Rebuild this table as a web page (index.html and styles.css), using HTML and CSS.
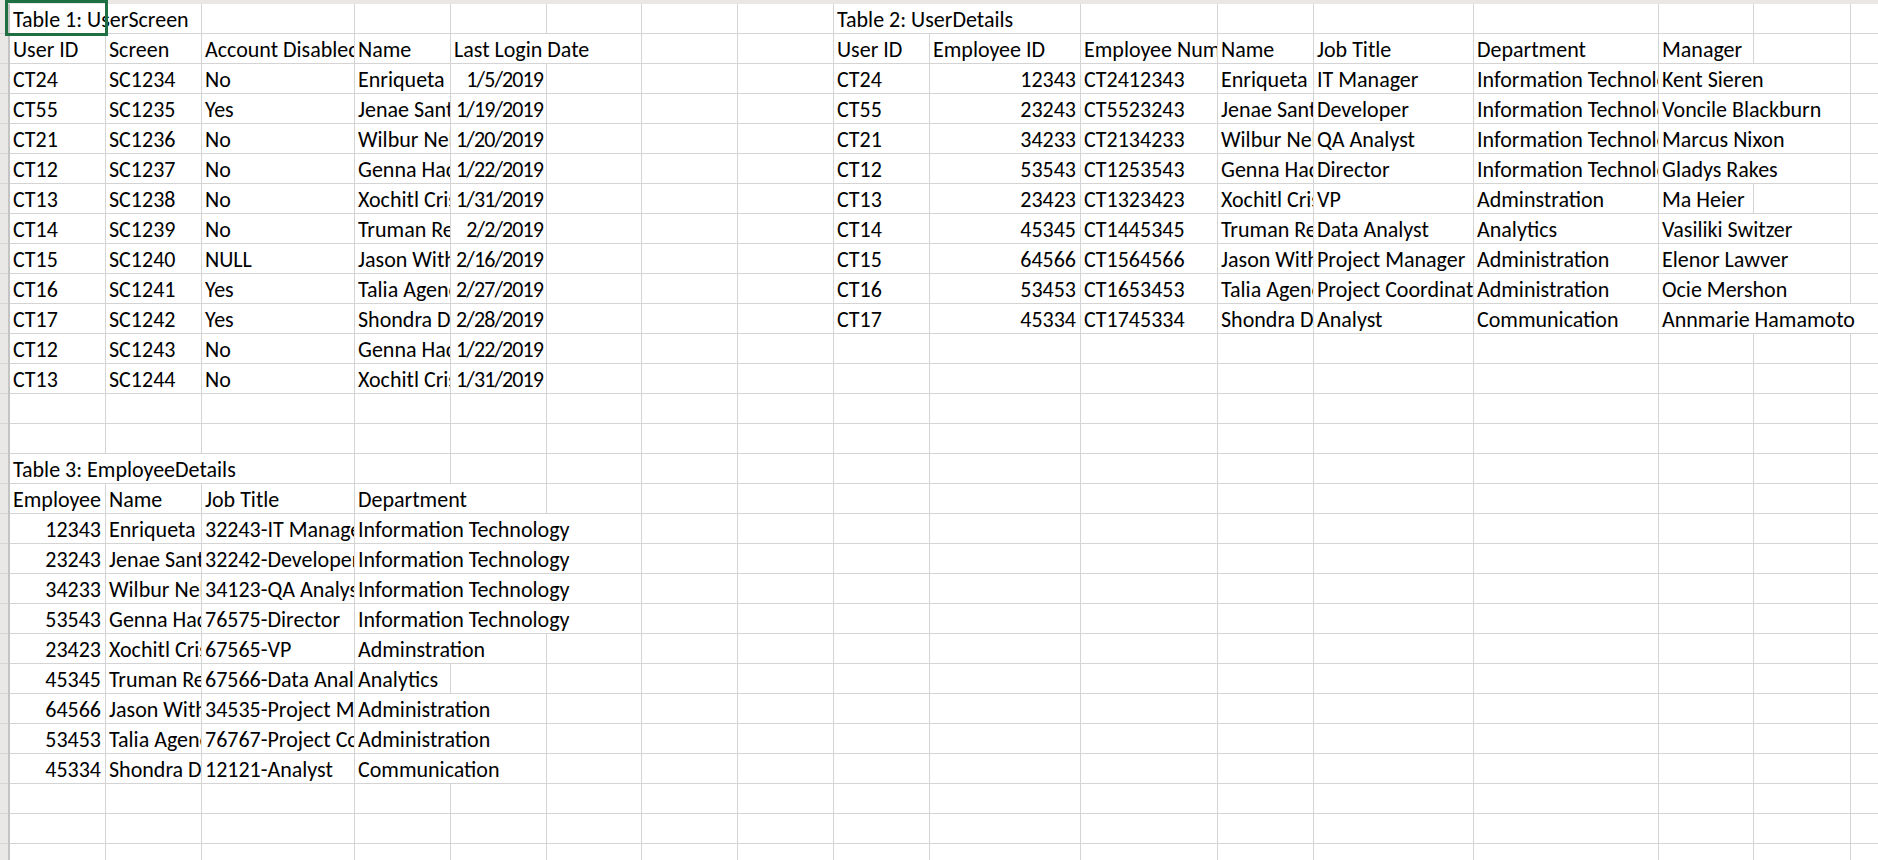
FILE: index.html
```html
<!DOCTYPE html>
<html>
<head>
<meta charset="utf-8">
<title>Sheet</title>
<link rel="stylesheet" href="styles.css">
</head>
<body>
<div class="topbar"></div>
<div class="main">
  <div class="rowheads">
    <div class="rh"></div><div class="rh"></div><div class="rh"></div><div class="rh"></div><div class="rh"></div>
    <div class="rh"></div><div class="rh"></div><div class="rh"></div><div class="rh"></div><div class="rh"></div>
    <div class="rh"></div><div class="rh"></div><div class="rh"></div><div class="rh"></div><div class="rh"></div>
    <div class="rh"></div><div class="rh"></div><div class="rh"></div><div class="rh"></div><div class="rh"></div>
    <div class="rh"></div><div class="rh"></div><div class="rh"></div><div class="rh"></div><div class="rh"></div>
    <div class="rh"></div><div class="rh"></div><div class="rh"></div><div class="rh"></div>
  </div>
  <div class="grid">
    <!-- row 1 -->
    <div class="c s2 sel">Table 1: UserScreen<div class="selbox"></div></div>
    <div class="c"></div><div class="c"></div><div class="c"></div><div class="c"></div><div class="c"></div><div class="c"></div>
    <div class="c s2">Table 2: UserDetails</div>
    <div class="c"></div><div class="c"></div><div class="c"></div><div class="c"></div><div class="c"></div><div class="c"></div><div class="c"></div>
    <!-- row 2 -->
    <div class="c">User ID</div><div class="c">Screen</div><div class="c">Account Disabled</div><div class="c">Name</div><div class="c s2">Last Login Date</div>
    <div class="c"></div><div class="c"></div>
    <div class="c">User ID</div><div class="c">Employee ID</div><div class="c">Employee Number</div><div class="c">Name</div><div class="c">Job Title</div><div class="c">Department</div><div class="c">Manager</div>
    <div class="c"></div><div class="c"></div>
    <!-- row 3 -->
    <div class="c">CT24</div><div class="c">SC1234</div><div class="c">No</div><div class="c">Enriqueta</div><div class="c r d">1/5/2019</div>
    <div class="c"></div><div class="c"></div><div class="c"></div>
    <div class="c">CT24</div><div class="c r">12343</div><div class="c">CT2412343</div><div class="c">Enriqueta</div><div class="c">IT Manager</div><div class="c">Information Technology</div><div class="c s2">Kent Sieren</div>
    <div class="c"></div>
    <!-- row 4 -->
    <div class="c">CT55</div><div class="c">SC1235</div><div class="c">Yes</div><div class="c">Jenae Santiago</div><div class="c r d">1/19/2019</div>
    <div class="c"></div><div class="c"></div><div class="c"></div>
    <div class="c">CT55</div><div class="c r">23243</div><div class="c">CT5523243</div><div class="c">Jenae Santiago</div><div class="c">Developer</div><div class="c">Information Technology</div><div class="c s2">Voncile Blackburn</div>
    <div class="c"></div>
    <!-- row 5 -->
    <div class="c">CT21</div><div class="c">SC1236</div><div class="c">No</div><div class="c">Wilbur Nelson</div><div class="c r d">1/20/2019</div>
    <div class="c"></div><div class="c"></div><div class="c"></div>
    <div class="c">CT21</div><div class="c r">34233</div><div class="c">CT2134233</div><div class="c">Wilbur Nelson</div><div class="c">QA Analyst</div><div class="c">Information Technology</div><div class="c s2">Marcus Nixon</div>
    <div class="c"></div>
    <!-- row 6 -->
    <div class="c">CT12</div><div class="c">SC1237</div><div class="c">No</div><div class="c">Genna Hadley</div><div class="c r d">1/22/2019</div>
    <div class="c"></div><div class="c"></div><div class="c"></div>
    <div class="c">CT12</div><div class="c r">53543</div><div class="c">CT1253543</div><div class="c">Genna Hadley</div><div class="c">Director</div><div class="c">Information Technology</div><div class="c s2">Gladys Rakes</div>
    <div class="c"></div>
    <!-- row 7 -->
    <div class="c">CT13</div><div class="c">SC1238</div><div class="c">No</div><div class="c">Xochitl Crisp</div><div class="c r d">1/31/2019</div>
    <div class="c"></div><div class="c"></div><div class="c"></div>
    <div class="c">CT13</div><div class="c r">23423</div><div class="c">CT1323423</div><div class="c">Xochitl Crisp</div><div class="c">VP</div><div class="c">Adminstration</div><div class="c">Ma Heier</div>
    <div class="c"></div><div class="c"></div>
    <!-- row 8 -->
    <div class="c">CT14</div><div class="c">SC1239</div><div class="c">No</div><div class="c">Truman Reyes</div><div class="c r d">2/2/2019</div>
    <div class="c"></div><div class="c"></div><div class="c"></div>
    <div class="c">CT14</div><div class="c r">45345</div><div class="c">CT1445345</div><div class="c">Truman Reyes</div><div class="c">Data Analyst</div><div class="c">Analytics</div><div class="c s2">Vasiliki Switzer</div>
    <div class="c"></div>
    <!-- row 9 -->
    <div class="c">CT15</div><div class="c">SC1240</div><div class="c">NULL</div><div class="c">Jason Withers</div><div class="c r d">2/16/2019</div>
    <div class="c"></div><div class="c"></div><div class="c"></div>
    <div class="c">CT15</div><div class="c r">64566</div><div class="c">CT1564566</div><div class="c">Jason Withers</div><div class="c">Project Manager</div><div class="c">Administration</div><div class="c s2">Elenor Lawver</div>
    <div class="c"></div>
    <!-- row 10 -->
    <div class="c">CT16</div><div class="c">SC1241</div><div class="c">Yes</div><div class="c">Talia Agenor</div><div class="c r d">2/27/2019</div>
    <div class="c"></div><div class="c"></div><div class="c"></div>
    <div class="c">CT16</div><div class="c r">53453</div><div class="c">CT1653453</div><div class="c">Talia Agenor</div><div class="c">Project Coordinator</div><div class="c">Administration</div><div class="c s2">Ocie Mershon</div>
    <div class="c"></div>
    <!-- row 11 -->
    <div class="c">CT17</div><div class="c">SC1242</div><div class="c">Yes</div><div class="c">Shondra Dunn</div><div class="c r d">2/28/2019</div>
    <div class="c"></div><div class="c"></div><div class="c"></div>
    <div class="c">CT17</div><div class="c r">45334</div><div class="c">CT1745334</div><div class="c">Shondra Dunn</div><div class="c">Analyst</div><div class="c">Communication</div><div class="c s3">Annmarie Hamamoto</div>
    <!-- row 12 -->
    <div class="c">CT12</div><div class="c">SC1243</div><div class="c">No</div><div class="c">Genna Hadley</div><div class="c r d">1/22/2019</div>
    <div class="c"></div><div class="c"></div><div class="c"></div>
    <div class="c"></div><div class="c"></div><div class="c"></div><div class="c"></div><div class="c"></div><div class="c"></div><div class="c"></div><div class="c"></div><div class="c"></div>
    <!-- row 13 -->
    <div class="c">CT13</div><div class="c">SC1244</div><div class="c">No</div><div class="c">Xochitl Crisp</div><div class="c r d">1/31/2019</div>
    <div class="c"></div><div class="c"></div><div class="c"></div>
    <div class="c"></div><div class="c"></div><div class="c"></div><div class="c"></div><div class="c"></div><div class="c"></div><div class="c"></div><div class="c"></div><div class="c"></div>
    <!-- row 14 -->
    <div class="c"></div><div class="c"></div><div class="c"></div><div class="c"></div><div class="c"></div><div class="c"></div><div class="c"></div><div class="c"></div>
    <div class="c"></div><div class="c"></div><div class="c"></div><div class="c"></div><div class="c"></div><div class="c"></div><div class="c"></div><div class="c"></div><div class="c"></div>
    <!-- row 15 -->
    <div class="c"></div><div class="c"></div><div class="c"></div><div class="c"></div><div class="c"></div><div class="c"></div><div class="c"></div><div class="c"></div>
    <div class="c"></div><div class="c"></div><div class="c"></div><div class="c"></div><div class="c"></div><div class="c"></div><div class="c"></div><div class="c"></div><div class="c"></div>
    <!-- row 16 -->
    <div class="c s3">Table 3: EmployeeDetails</div>
    <div class="c"></div><div class="c"></div><div class="c"></div><div class="c"></div><div class="c"></div><div class="c"></div><div class="c"></div>
    <div class="c"></div><div class="c"></div><div class="c"></div><div class="c"></div><div class="c"></div><div class="c"></div><div class="c"></div>
    <!-- row 17 -->
    <div class="c">Employee ID</div><div class="c">Name</div><div class="c">Job Title</div><div class="c s2">Department</div>
    <div class="c"></div><div class="c"></div><div class="c"></div><div class="c"></div><div class="c"></div><div class="c"></div>
    <div class="c"></div><div class="c"></div><div class="c"></div><div class="c"></div><div class="c"></div><div class="c"></div>
    <!-- row 18 -->
    <div class="c r">12343</div><div class="c">Enriqueta</div><div class="c">32243-IT Manager</div><div class="c s3">Information Technology</div>
    <div class="c"></div><div class="c"></div><div class="c"></div><div class="c"></div><div class="c"></div><div class="c"></div>
    <div class="c"></div><div class="c"></div><div class="c"></div><div class="c"></div><div class="c"></div>
    <!-- row 19 -->
    <div class="c r">23243</div><div class="c">Jenae Santiago</div><div class="c">32242-Developer</div><div class="c s3">Information Technology</div>
    <div class="c"></div><div class="c"></div><div class="c"></div><div class="c"></div><div class="c"></div><div class="c"></div>
    <div class="c"></div><div class="c"></div><div class="c"></div><div class="c"></div><div class="c"></div>
    <!-- row 20 -->
    <div class="c r">34233</div><div class="c">Wilbur Nelson</div><div class="c">34123-QA Analyst</div><div class="c s3">Information Technology</div>
    <div class="c"></div><div class="c"></div><div class="c"></div><div class="c"></div><div class="c"></div><div class="c"></div>
    <div class="c"></div><div class="c"></div><div class="c"></div><div class="c"></div><div class="c"></div>
    <!-- row 21 -->
    <div class="c r">53543</div><div class="c">Genna Hadley</div><div class="c">76575-Director</div><div class="c s3">Information Technology</div>
    <div class="c"></div><div class="c"></div><div class="c"></div><div class="c"></div><div class="c"></div><div class="c"></div>
    <div class="c"></div><div class="c"></div><div class="c"></div><div class="c"></div><div class="c"></div>
    <!-- row 22 -->
    <div class="c r">23423</div><div class="c">Xochitl Crisp</div><div class="c">67565-VP</div><div class="c s2">Adminstration</div>
    <div class="c"></div><div class="c"></div><div class="c"></div><div class="c"></div><div class="c"></div><div class="c"></div>
    <div class="c"></div><div class="c"></div><div class="c"></div><div class="c"></div><div class="c"></div><div class="c"></div>
    <!-- row 23 -->
    <div class="c r">45345</div><div class="c">Truman Reyes</div><div class="c">67566-Data Analyst</div><div class="c">Analytics</div>
    <div class="c"></div><div class="c"></div><div class="c"></div><div class="c"></div><div class="c"></div><div class="c"></div><div class="c"></div>
    <div class="c"></div><div class="c"></div><div class="c"></div><div class="c"></div><div class="c"></div><div class="c"></div>
    <!-- row 24 -->
    <div class="c r">64566</div><div class="c">Jason Withers</div><div class="c">34535-Project Manager</div><div class="c s2">Administration</div>
    <div class="c"></div><div class="c"></div><div class="c"></div><div class="c"></div><div class="c"></div><div class="c"></div>
    <div class="c"></div><div class="c"></div><div class="c"></div><div class="c"></div><div class="c"></div><div class="c"></div>
    <!-- row 25 -->
    <div class="c r">53453</div><div class="c">Talia Agenor</div><div class="c">76767-Project Coordinator</div><div class="c s2">Administration</div>
    <div class="c"></div><div class="c"></div><div class="c"></div><div class="c"></div><div class="c"></div><div class="c"></div>
    <div class="c"></div><div class="c"></div><div class="c"></div><div class="c"></div><div class="c"></div><div class="c"></div>
    <!-- row 26 -->
    <div class="c r">45334</div><div class="c">Shondra Dunn</div><div class="c">12121-Analyst</div><div class="c s2">Communication</div>
    <div class="c"></div><div class="c"></div><div class="c"></div><div class="c"></div><div class="c"></div><div class="c"></div>
    <div class="c"></div><div class="c"></div><div class="c"></div><div class="c"></div><div class="c"></div><div class="c"></div>
    <!-- row 27 -->
    <div class="c"></div><div class="c"></div><div class="c"></div><div class="c"></div><div class="c"></div><div class="c"></div><div class="c"></div><div class="c"></div>
    <div class="c"></div><div class="c"></div><div class="c"></div><div class="c"></div><div class="c"></div><div class="c"></div><div class="c"></div><div class="c"></div><div class="c"></div>
    <!-- row 28 -->
    <div class="c"></div><div class="c"></div><div class="c"></div><div class="c"></div><div class="c"></div><div class="c"></div><div class="c"></div><div class="c"></div>
    <div class="c"></div><div class="c"></div><div class="c"></div><div class="c"></div><div class="c"></div><div class="c"></div><div class="c"></div><div class="c"></div><div class="c"></div>
    <!-- row 29 -->
    <div class="c"></div><div class="c"></div><div class="c"></div><div class="c"></div><div class="c"></div><div class="c"></div><div class="c"></div><div class="c"></div>
    <div class="c"></div><div class="c"></div><div class="c"></div><div class="c"></div><div class="c"></div><div class="c"></div><div class="c"></div><div class="c"></div><div class="c"></div>
  </div>
</div>
</body>
</html>
```
FILE: styles.css
```css
* { box-sizing: border-box; }
html, body { margin: 0; padding: 0; background: #ffffff; }
body {
  width: 1878px;
  height: 860px;
  overflow: hidden;
  font-family: Carlito, Lato, "Liberation Sans", sans-serif;
  font-size: 22px;
  color: #000000;
}
.topbar { height: 4px; background: #e9e8e6; }
.main { display: flex; align-items: flex-start; }
.rowheads {
  flex: none;
  width: 10px;
  background: #e9e8e6;
  border-right: 2px solid #c4c4c4;
}
.rh { height: 30px; border-bottom: 1px solid #d6d6d6; }
.grid {
  flex: none;
  display: grid;
  grid-template-columns: 96px 96px 153px 96px 96px 95px 96px 96px 96px 151px 137px 96px 160px 185px 95px 97px 96px;
  grid-auto-rows: 30px;
}
.c {
  border-right: 1px solid #d4d4d4;
  border-bottom: 1px solid #d4d4d4;
  padding: 3px 4px 0 3px;
  white-space: nowrap;
  overflow: hidden;
  line-height: 26px;
}
.r { text-align: right; }
.d { letter-spacing: -0.9px; padding-right: 3px; }
.s2 { grid-column: span 2; }
.s3 { grid-column: span 3; }
.sel { position: relative; overflow: visible; }
.selbox {
  position: absolute;
  left: -5px;
  top: -4px;
  width: 103px;
  height: 36px;
  border: 3px solid #1e6f42;
}
```
